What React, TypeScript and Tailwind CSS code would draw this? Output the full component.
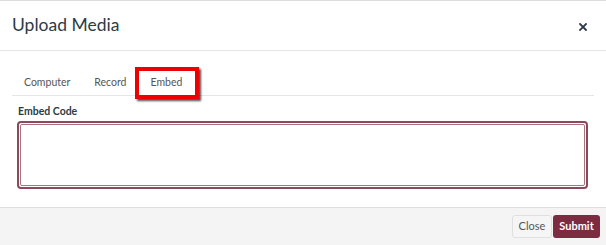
import React from "react";

const tabs = ["Computer", "Record", "Embed"];

export default function App() {
  return (
    <div
      className="w-[606px] h-[245px] bg-white flex flex-col border-t border-[#dcdcdc] overflow-hidden"
      style={{ fontFamily: "Lato, 'Open Sans', sans-serif" }}
    >
      {/* header */}
      <div className="h-[50px] shrink-0 flex items-center justify-between pl-3 pr-[19px] border-b border-[#e2e4e6]">
        <h2 className="text-[17.5px] leading-none text-[#2d3b45] pb-[2px]">Upload Media</h2>
        <svg width="8" height="8" viewBox="0 0 8 8" className="mt-[2px]">
          <path d="M1 1L7 7M7 1L1 7" stroke="#2d3b45" strokeWidth="1.8" strokeLinecap="square" />
        </svg>
      </div>

      {/* body */}
      <div className="flex-1 px-3 pt-[16px]">
        <div className="flex h-[29px] border-b border-[#e4e6e8]">
          {tabs.map((t) => (
            <div
              key={t}
              className="relative flex items-center px-[12px] pt-[3px] text-[10.5px] text-[#555]"
            >
              {t}
              {t === "Embed" && (
                <div className="absolute left-[-4px] right-[-5px] top-0 h-[32px] border-[4px] border-[#ee0000] shadow-[2px_2px_2px_rgba(0,0,0,0.7)]" />
              )}
            </div>
          ))}
        </div>
        <div className="pl-[6px] pt-[8px] pb-[3px] text-[10.5px] leading-[14px] font-bold text-[#2d3b45]">
          Embed Code
        </div>
        <div className="ml-[5px] mr-[6px] h-[68px] rounded-[4px] border-2 border-[#8a4a5c] p-[1px]">
          <div className="h-full rounded-[2px] border border-[#a8737f]" />
        </div>
      </div>

      {/* footer */}
      <div className="h-[38px] shrink-0 bg-[#f4f4f4] border-t border-[#dedede] flex items-center justify-end gap-[1px] pr-[6px]">
        <button className="h-[23px] w-[40px] rounded-[3px] border border-[#e0e0e0] bg-[#f5f5f5] text-[11px] text-[#555]">
          Close
        </button>
        <button className="h-[23px] w-[47px] rounded-[3px] bg-[#7d2b40] text-[11px] font-bold text-white">
          Submit
        </button>
      </div>
    </div>
  );
}
